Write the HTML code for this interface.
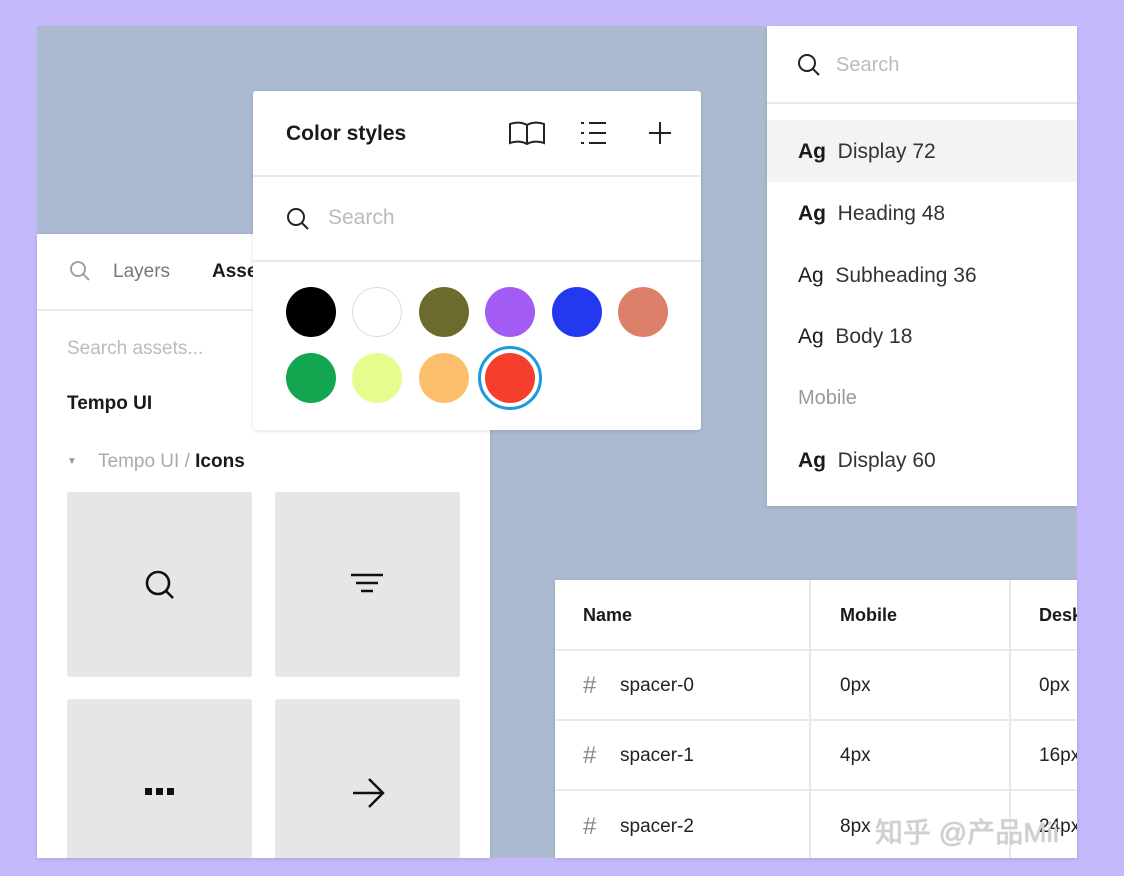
<!DOCTYPE html>
<html><head><meta charset="utf-8"><style>
*{margin:0;padding:0;box-sizing:border-box}
body{width:1124px;height:876px;background:#c4b9fb;position:relative;overflow:hidden;font-family:"Liberation Sans","Noto Sans CJK SC",sans-serif;color:#1a1a1a}
.abs{position:absolute}
.canvas{left:37px;top:26px;width:1040px;height:832px;background:#abbad0}
.panel{background:#fff;box-shadow:0 1px 4px rgba(0,0,0,.12)}
.t{position:absolute;white-space:nowrap}
.hr{position:absolute;height:2px;background:#e9e9e9}
.dot{position:absolute;width:50px;height:50px;border-radius:50%}
.tile{position:absolute;background:#e6e6e6;border-radius:3px}
</style></head><body>
<div class="abs canvas"></div>

<!-- left assets panel -->
<div class="abs panel" style="left:37px;top:234px;width:453px;height:624px;overflow:hidden">
  <svg class="abs" style="left:32px;top:26px" width="22" height="22" viewBox="0 0 22 22" fill="none" stroke="#999" stroke-width="1.8"><circle cx="9" cy="9" r="7"/><path d="M14 14l6 6"/></svg>
  <div class="t" style="left:76px;top:27px;font-size:19px;color:#777">Layers</div>
  <div class="t" style="left:175px;top:27px;font-size:19px;font-weight:bold">Assets</div>
  <div class="hr" style="left:0;top:75px;width:453px"></div>
  <div class="t" style="left:30px;top:104px;font-size:19px;color:#bbb">Search assets...</div>
  <div class="t" style="left:30px;top:159px;font-size:19px;font-weight:bold">Tempo UI</div>
  <div class="t" style="left:30px;top:222px;font-size:10px;color:#999">▼</div>
  <div class="t" style="left:61px;top:217px;font-size:19px;color:#aaa">Tempo UI / <b style="color:#1a1a1a">Icons</b></div>
  <div class="tile" style="left:30px;top:258px;width:185px;height:185px">
    <svg class="abs" style="left:75px;top:75px" width="36" height="36" viewBox="0 0 36 36" fill="none" stroke="#111" stroke-width="2.6"><circle cx="16" cy="16" r="11"/><path d="M24 24l7 7"/></svg>
  </div>
  <div class="tile" style="left:238px;top:258px;width:185px;height:185px">
    <svg class="abs" style="left:74px;top:79px" width="36" height="24" viewBox="0 0 36 24" fill="none" stroke="#111" stroke-width="2.6"><path d="M2 4h32M7 12h22M12 20h12"/></svg>
  </div>
  <div class="tile" style="left:30px;top:465px;width:185px;height:170px">
    <svg class="abs" style="left:77px;top:88px" width="32" height="10"><rect x="1" y="1" width="7" height="7" fill="#111"/><rect x="12" y="1" width="7" height="7" fill="#111"/><rect x="23" y="1" width="7" height="7" fill="#111"/></svg>
  </div>
  <div class="tile" style="left:238px;top:465px;width:185px;height:170px">
    <svg class="abs" style="left:76px;top:78px" width="36" height="32" viewBox="0 0 36 32" fill="none" stroke="#111" stroke-width="2.4"><path d="M2 16h30M18 2l14 14-14 14"/></svg>
  </div>
</div>

<!-- color styles -->
<div class="abs panel" style="left:253px;top:91px;width:448px;height:339px;border-radius:3px">
  <div class="t" style="left:33px;top:31px;font-size:21px;font-weight:bold">Color styles</div>
  <svg class="abs" style="left:255px;top:29px" width="38" height="26" viewBox="0 0 38 26" fill="none" stroke="#222" stroke-width="2"><path d="M19 5C14 2 7 2 2 4v19c5-2 12-2 17 1 5-3 12-3 17-1V4C31 2 24 2 19 5zM19 5v19"/></svg>
  <svg class="abs" style="left:327px;top:29px" width="28" height="26" viewBox="0 0 28 26" fill="none" stroke="#222" stroke-width="2"><path d="M1 3h3M9 3h17M1 13h3M9 13h17M1 23h3M9 23h17"/></svg>
  <svg class="abs" style="left:395px;top:30px" width="24" height="24" viewBox="0 0 24 24" fill="none" stroke="#222" stroke-width="2"><path d="M12 1v22M1 12h22"/></svg>
  <div class="hr" style="left:0;top:84px;width:448px"></div>
  <svg class="abs" style="left:33px;top:116px" width="24" height="24" viewBox="0 0 24 24" fill="none" stroke="#222" stroke-width="2"><circle cx="10" cy="10" r="8"/><path d="M16 16l6 6"/></svg>
  <div class="t" style="left:75px;top:115px;font-size:21px;color:#bbb">Search</div>
  <div class="hr" style="left:0;top:169px;width:448px"></div>
  <div class="dot" style="left:33px;top:196px;background:#000"></div>
  <div class="dot" style="left:99px;top:196px;background:#fff;border:1px solid #ddd"></div>
  <div class="dot" style="left:166px;top:196px;background:#6b6b2e"></div>
  <div class="dot" style="left:232px;top:196px;background:#a35bf6"></div>
  <div class="dot" style="left:299px;top:196px;background:#2438f0"></div>
  <div class="dot" style="left:365px;top:196px;background:#dd806a"></div>
  <div class="dot" style="left:33px;top:262px;background:#12a650"></div>
  <div class="dot" style="left:99px;top:262px;background:#e5fd8c"></div>
  <div class="dot" style="left:166px;top:262px;background:#fcbe6a"></div>
  <div class="abs" style="left:225px;top:255px;width:64px;height:64px;border-radius:50%;border:3px solid #1b9be0;background:#fff"></div>
  <div class="dot" style="left:232px;top:262px;background:#f63e2c"></div>
</div>

<!-- text styles -->
<div class="abs panel" style="left:767px;top:26px;width:310px;height:480px">
  <svg class="abs" style="left:30px;top:27px" width="24" height="24" viewBox="0 0 24 24" fill="none" stroke="#222" stroke-width="2"><circle cx="10" cy="10" r="8"/><path d="M16 16l6 6"/></svg>
  <div class="t" style="left:69px;top:28px;font-size:20px;color:#bbb">Search</div>
  <div class="hr" style="left:0;top:76px;width:310px"></div>
  <div class="abs" style="left:0;top:94px;width:310px;height:62px;background:#f3f3f3"></div>
  <div class="t" style="left:31px;top:114px;font-size:21px"><b>Ag</b>&nbsp;&nbsp;<span style="color:#333">Display 72</span></div>
  <div class="t" style="left:31px;top:176px;font-size:21px"><span style="font-weight:600">Ag</span>&nbsp;&nbsp;<span style="color:#333">Heading 48</span></div>
  <div class="t" style="left:31px;top:238px;font-size:21px">Ag&nbsp;&nbsp;<span style="color:#333">Subheading 36</span></div>
  <div class="t" style="left:31px;top:299px;font-size:21px">Ag&nbsp;&nbsp;<span style="color:#333">Body 18</span></div>
  <div class="t" style="left:31px;top:361px;font-size:20px;color:#999">Mobile</div>
  <div class="t" style="left:31px;top:423px;font-size:21px"><b>Ag</b>&nbsp;&nbsp;<span style="color:#333">Display 60</span></div>
</div>

<!-- table -->
<div class="abs panel" style="left:555px;top:580px;width:522px;height:278px;overflow:hidden">
  <div class="abs" style="left:254px;top:0;width:2px;height:278px;background:#e9e9e9"></div>
  <div class="abs" style="left:454px;top:0;width:2px;height:278px;background:#e9e9e9"></div>
  <div class="hr" style="left:0;top:69px;width:522px"></div>
  <div class="hr" style="left:0;top:139px;width:522px"></div>
  <div class="hr" style="left:0;top:209px;width:522px"></div>
  <div class="t" style="left:28px;top:25px;font-size:18px;font-weight:600">Name</div>
  <div class="t" style="left:285px;top:25px;font-size:18px;font-weight:600">Mobile</div>
  <div class="t" style="left:484px;top:25px;font-size:18px;font-weight:600">Desktop</div>
  <div class="t" style="left:28px;top:92px;font-size:24px;color:#888">#</div>
  <div class="t" style="left:65px;top:95px;font-size:19px;color:#222">spacer-0</div>
  <div class="t" style="left:285px;top:95px;font-size:19px;color:#222">0px</div>
  <div class="t" style="left:484px;top:95px;font-size:19px;color:#222">0px</div>
  <div class="t" style="left:28px;top:162px;font-size:24px;color:#888">#</div>
  <div class="t" style="left:65px;top:165px;font-size:19px;color:#222">spacer-1</div>
  <div class="t" style="left:285px;top:165px;font-size:19px;color:#222">4px</div>
  <div class="t" style="left:484px;top:165px;font-size:19px;color:#222">16px</div>
  <div class="t" style="left:28px;top:233px;font-size:24px;color:#888">#</div>
  <div class="t" style="left:65px;top:236px;font-size:19px;color:#222">spacer-2</div>
  <div class="t" style="left:285px;top:236px;font-size:19px;color:#222">8px</div>
  <div class="t" style="left:484px;top:236px;font-size:19px;color:#222">24px</div>
</div>
<div class="t" style="left:875px;top:811px;font-size:28px;color:#cfcfd4;text-shadow:0 0 1px #999">知乎 @产品Mii</div>
</body></html>
